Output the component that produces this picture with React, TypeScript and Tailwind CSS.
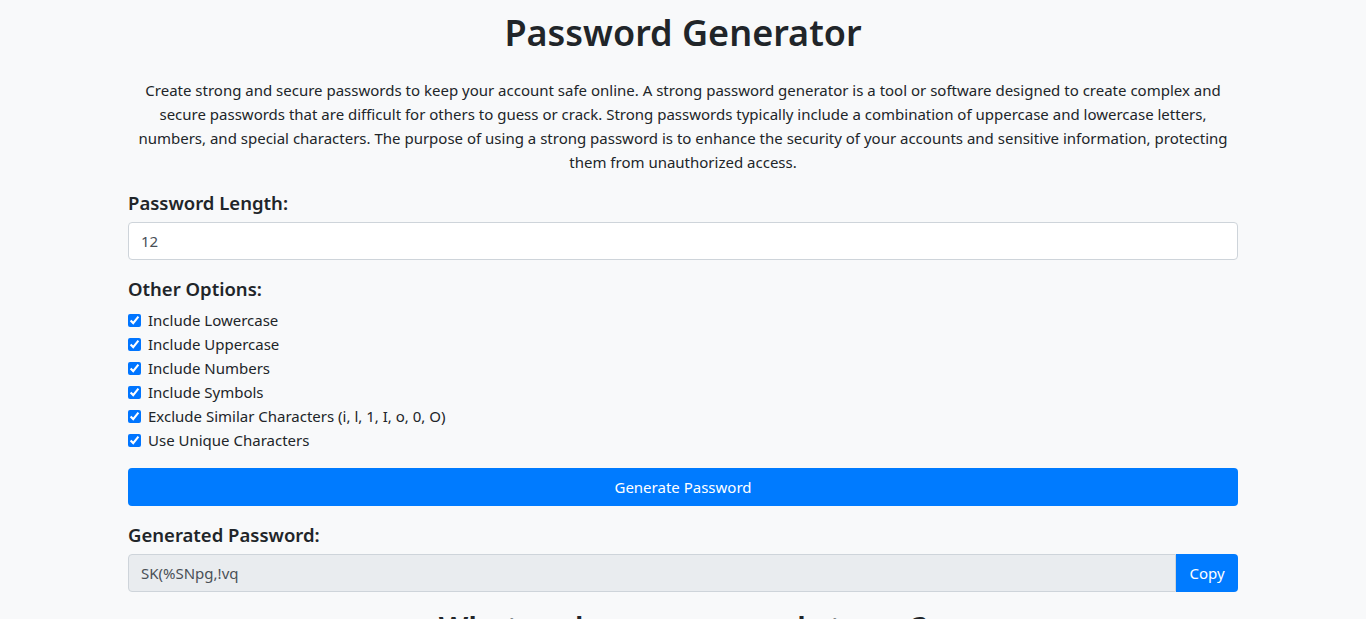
import { useState } from 'react'

const OPTIONS = [
  'Include Lowercase',
  'Include Uppercase',
  'Include Numbers',
  'Include Symbols',
  'Exclude Similar Characters (i, l, 1, I, o, 0, O)',
  'Use Unique Characters',
]

export default function App() {
  const [length, setLength] = useState('12')
  const [checked, setChecked] = useState<boolean[]>(OPTIONS.map(() => true))
  const password = 'SK(%SNpg,!vq'

  function toggle(i: number) {
    setChecked((prev) => prev.map((v, j) => (j === i ? !v : v)))
  }

  return (
    <div className="min-h-screen bg-[#f8f9fa] text-[#212529] font-['Segoe_UI','Noto_Sans',sans-serif]">
      <div className="mx-auto w-[1110px] pt-[9px]">
        <h1 className="text-center text-[36px] leading-[48px] font-semibold mb-[21px]">
          Password Generator
        </h1>

        <p className="text-center text-[15px] leading-6 mb-[17px]">
          Create strong and secure passwords to keep your account safe online. A strong password
          generator is a tool or software designed to create complex and secure passwords that are
          difficult for others to guess or crack. Strong passwords typically include a combination
          of uppercase and lowercase letters, numbers, and special characters. The purpose of using
          a strong password is to enhance the security of your accounts and sensitive information,
          protecting them from unauthorized access.
        </p>

        <h5 className="text-[18.5px] leading-6 font-semibold mb-[7px]">Password Length:</h5>
        <input
          type="number"
          value={length}
          onChange={(e) => setLength(e.target.value)}
          className="block w-full h-[38px] rounded-[4px] border border-[#ced4da] bg-white px-3 text-[15px] text-[#495057] outline-none [appearance:textfield]"
        />

        <h5 className="text-[18.5px] leading-6 font-semibold mt-[17px] mb-[7px]">Other Options:</h5>
        <div className="flex flex-col">
          {OPTIONS.map((label, i) => (
            <label key={label} className="flex items-center h-6 text-[15px]">
              <input
                type="checkbox"
                checked={checked[i]}
                onChange={() => toggle(i)}
                className="m-0 w-[13px] h-[13px] accent-[#0075ff]"
              />
              <span className="ml-[7px]">{label}</span>
            </label>
          ))}
        </div>

        <button
          type="button"
          className="mt-4 block w-full h-[38px] rounded-[4px] bg-[#007bff] text-white text-[15px]"
        >
          Generate Password
        </button>

        <h5 className="text-[18.5px] leading-6 font-semibold mt-[17px] mb-[7px]">
          Generated Password:
        </h5>
        <div className="flex h-[38px]">
          <input
            readOnly
            value={password}
            className="flex-1 min-w-0 rounded-l-[4px] border border-[#ced4da] bg-[#e9ecef] px-3 text-[15px] text-[#495057] outline-none"
          />
          <button
            type="button"
            className="w-[62px] rounded-r-[4px] bg-[#007bff] text-white text-[15px]"
          >
            Copy
          </button>
        </div>

        <h2 className="text-center text-[31px] leading-[38px] font-semibold mt-[16px]">
          What makes a password strong?
        </h2>
      </div>
    </div>
  )
}
